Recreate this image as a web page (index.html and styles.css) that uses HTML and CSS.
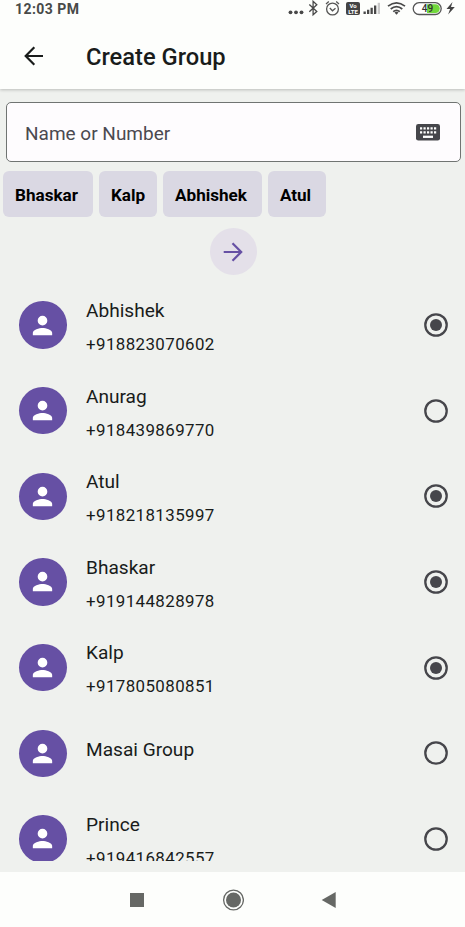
FILE: index.html
```html
<!DOCTYPE html>
<html lang="en">
<head>
<meta charset="utf-8">
<title>Create Group</title>
<link rel="stylesheet" href="styles.css">
</head>
<body>
<svg class="defs" aria-hidden="true">
  <symbol id="person" viewBox="0 0 24 24"><path fill="currentColor" d="M12 12a4 4 0 1 0 0-8 4 4 0 0 0 0 8zm0 2c-2.670 0-8 1.340-8 4v2h16v-2c0-2.660-5.330-4-8-4z"/></symbol>
  <symbol id="radio-on" viewBox="0 0 24 24"><circle cx="12" cy="12" r="10.700" fill="none" stroke="currentColor" stroke-width="2.300"/><circle cx="12" cy="12" r="6" fill="currentColor"/></symbol>
  <symbol id="radio-off" viewBox="0 0 24 24"><circle cx="12" cy="12" r="10.700" fill="none" stroke="currentColor" stroke-width="2.300"/></symbol>
</svg>
<div class="phone">
  <header class="top">
    <div class="status">
      <span class="clock">12:03 PM</span>
      <svg class="status-icons" viewBox="285 0 180 20" width="180" height="20">
        <g fill="#484848"><circle cx="290.500" cy="12.300" r="1.900"/><circle cx="296" cy="12.300" r="1.900"/><circle cx="301.500" cy="12.300" r="1.900"/></g>
        <path d="M309.300 4.500l7.500 7-3.700 3.300V1.300l3.700 3.400-7.500 7" fill="none" stroke="#484848" stroke-width="1.300"/>
        <g fill="none" stroke="#555" stroke-width="1.300"><circle cx="332.500" cy="9" r="5.900"/><path d="M329.800 8l2.700 2.800 3-2.500M326 4l2.800-2.400M339 4l-2.800-2.400"/></g>
        <rect x="346" y="2" width="14" height="13" rx="2" fill="#444"/>
        <text x="353" y="8.200" class="volte">Vo</text><text x="353" y="14" class="volte">LTE</text>
        <g fill="#484848"><path d="M363.500 11.500h2.300V14h-2.300zM367 9.800h2.300V14H367zM370.500 7.800h2.300V14h-2.300zM374 5.500h2.300V14H374z"/><path fill="#c9c9c9" d="M377.700 2.800h2.300V14h-2.300z"/></g>
        <g fill="none" stroke="#484848" stroke-width="1.700"><path d="M388 6.200q8.500-6.800 17 0M390.700 9q5.800-4.700 11.600 0M393.200 11.600q3.300-2.600 6.600 0"/></g><path d="M394.500 12.500q2-1.300 4 0l-2 2.300z" fill="#484848"/>
        <rect x="413.200" y="2.700" width="28" height="11.800" rx="5.900" fill="#fff" stroke="#555" stroke-width="1.300"/>
        <path d="M427 4.300h8.500a4.300 4.300 0 0 1 0 8.600H427z" fill="#72d83c"/>
        <text x="427.500" y="12.200" class="charge">49</text>
        <path d="M452.500 2l-6 7h3.600l-2 5.500 6.700-7.500H451z" fill="#444"/>
      </svg>
    </div>
    <div class="bar">
      <svg class="back" viewBox="0 0 20 20" width="20" height="20"><path d="M19 10H2M10.300 1.300L1.700 10l8.600 8.700" fill="none" stroke="#191c1b" stroke-width="2.200"/></svg>
      <h1>Create Group</h1>
    </div>
  </header>
  <main>
    <div class="field">
      <span>Name or Number</span>
      <svg viewBox="0 0 24 17" width="24" height="17"><rect width="24" height="16.500" rx="2.300" fill="#46464b"/><path d="M4 4.400h17M4 8.300h17" stroke="#fff" stroke-width="2.300" stroke-dasharray="2.200 1.300"/><path d="M7 12.800h10" stroke="#fff" stroke-width="2.300"/></svg>
    </div>
    <div class="chips"><span class="chip bhaskar">Bhaskar</span><span class="chip kalp">Kalp</span><span class="chip abhishek">Abhishek</span><span class="chip atul">Atul</span></div>
    <div class="next"><svg viewBox="0 0 20 20" width="20" height="20"><path d="M.7 10h17M9.500 1.300l8.700 8.700-8.700 8.700" fill="none" stroke="#6650a4" stroke-width="2.200"/></svg></div>
    <div class="list">
      <div class="row"><span class="avatar"><svg><use href="#person"/></svg></span><div class="who"><b>Abhishek</b><small>+918823070602</small></div><svg class="radio"><use href="#radio-on"/></svg></div>
      <div class="row"><span class="avatar"><svg><use href="#person"/></svg></span><div class="who"><b>Anurag</b><small>+918439869770</small></div><svg class="radio"><use href="#radio-off"/></svg></div>
      <div class="row"><span class="avatar"><svg><use href="#person"/></svg></span><div class="who"><b>Atul</b><small>+918218135997</small></div><svg class="radio"><use href="#radio-on"/></svg></div>
      <div class="row"><span class="avatar"><svg><use href="#person"/></svg></span><div class="who"><b>Bhaskar</b><small>+919144828978</small></div><svg class="radio"><use href="#radio-on"/></svg></div>
      <div class="row"><span class="avatar"><svg><use href="#person"/></svg></span><div class="who"><b>Kalp</b><small>+917805080851</small></div><svg class="radio"><use href="#radio-on"/></svg></div>
      <div class="row"><span class="avatar"><svg><use href="#person"/></svg></span><div class="who single"><b>Masai Group</b></div><svg class="radio"><use href="#radio-off"/></svg></div>
      <div class="row"><span class="avatar"><svg><use href="#person"/></svg></span><div class="who"><b>Prince</b><small>+919416842557</small></div><svg class="radio"><use href="#radio-off"/></svg></div>
    </div>
  </main>
  <nav>
    <svg viewBox="0 0 22 22"><rect x="4" y="4" width="14" height="14" fill="#666865"/></svg>
    <svg viewBox="0 0 22 22"><circle cx="11.500" cy="11" r="9.900" fill="none" stroke="#666865" stroke-width="1.300"/><circle cx="11.500" cy="11" r="7.500" fill="#666865"/></svg>
    <svg viewBox="0 0 22 22"><path d="M3.700 11l14-8v16z" fill="#666865"/></svg>
  </nav>
</div>
</body>
</html>
```
FILE: styles.css
```css
* { box-sizing: border-box; }
body { margin: 0; font-family: Roboto, sans-serif; color: #191c1b; background: #fdfefc; }
.defs { display: none; }
.phone { width: 465px; height: 927px; display: flex; flex-direction: column; overflow: hidden; }
.top { height: 89px; flex: none; position: relative; z-index: 1; background: #fdfefc; box-shadow: 0 1px 3px rgba(0, 0, 0, .22); }
.status { height: 20px; display: flex; justify-content: space-between; padding-left: 15px; }
.clock { font-size: 14px; line-height: 18px; font-weight: 700; letter-spacing: .45px; color: #484a48; }
.status svg { display: block; }
.volte { font-size: 6px; font-weight: 700; fill: #fff; text-anchor: middle; }
.charge { font-size: 10px; font-weight: 500; fill: #333; text-anchor: middle; }
.bar { height: 69px; display: flex; align-items: center; padding: 5px 0 0 23.500px; }
.back { margin-right: 42.500px; position: relative; top: -1px; }
h1 { margin: 0; font-size: 23.700px; line-height: 28px; font-weight: 500; white-space: nowrap; }
main { height: 783px; flex: none; background: #eff1ee; padding: 13px 0 11px; display: flex; flex-direction: column; }
.field { margin: 0 4px 0 6px; height: 60px; flex: none; border: 1px solid #707472; border-radius: 5px; background: #fefcfe; display: flex; align-items: center; justify-content: space-between; padding: 3px 20px 0 18px; font-size: 19px; color: #4b4950; }
.field svg { margin-top: -3px; }
.chips { display: flex; gap: 6px; height: 46px; flex: none; margin: 9px 0 1px 3px; }
.chip { background: #dad8e3; color: #000; border-radius: 6px; font-size: 17.100px; font-weight: 700; line-height: 49px; text-align: center; }
.bhaskar { width: 90px; padding-right: 3px; }
.kalp { width: 58px; }
.abhishek { width: 99px; padding-right: 3px; }
.atul { width: 58px; padding-right: 3px; }
.next { width: 47px; height: 47px; flex: none; margin: 10px 208px 7.200px 210px; border-radius: 50%; background: #e4e0e9; display: flex; align-items: center; justify-content: center; }
.next svg { margin-right: 1px; }
.list { flex: 1; min-height: 0; overflow: hidden; }
.row { height: 85.670px; display: flex; align-items: center; padding: 0 17px 0 19px; }
.avatar { width: 47.500px; height: 47.500px; border-radius: 50%; background: #6650a4; color: #fff; display: flex; align-items: center; justify-content: center; margin-right: 19.500px; }
.avatar svg { width: 29px; height: 29px; margin-left: -1px; }
.who { flex: 1; display: flex; flex-direction: column; gap: 9px; margin-top: 4.700px; }
.who.single { margin-top: -6px; }
.who b { font-size: 19.100px; line-height: 24px; font-weight: 400; }
.who small { font-size: 16.900px; line-height: 24px; letter-spacing: .4px; }
.radio { width: 24px; height: 24px; color: #46464b; }
nav { height: 55px; flex: none; background: #fdfefc; display: flex; justify-content: center; align-items: center; gap: 74px; padding: 1px 0 0 1px; }
nav svg { width: 22px; height: 22px; }
```
